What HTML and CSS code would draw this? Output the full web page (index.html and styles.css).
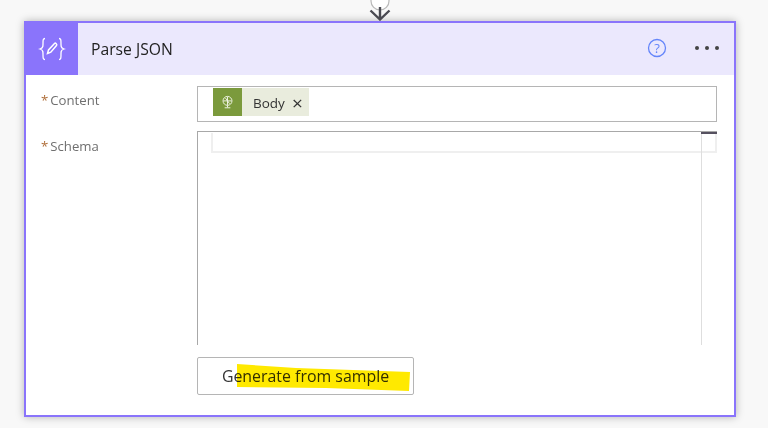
FILE: index.html
```html
<!DOCTYPE html>
<html lang="en">
<head>
  <meta charset="UTF-8">
  <meta name="viewport" content="width=device-width, initial-scale=1.0">
  <title>Parse JSON</title>
  <link rel="stylesheet" href="styles.css">
</head>
<body>
  <div class="connector">
    <svg width="28" height="21" viewBox="0 0 28 21">
      <circle cx="14" cy="1" r="9" fill="#fff" stroke="#b9b9b9" stroke-width="1.2"/>
      <path d="M14 7V20M4.500 10.500L14 19.500L23.500 10.500" fill="none" stroke="#4a4a52" stroke-width="2.400"/>
    </svg>
  </div>

  <div class="card">
    <div class="card-header">
      <div class="action-icon">
        <svg width="28" height="28" viewBox="0 0 28 28" fill="none" stroke="#fff" stroke-width="1.300">
          <path d="M7 3.500C4 3.500 5.500 8 4.800 11.500C4.500 13 3.500 13.500 2 14C3.500 14.500 4.500 15 4.800 16.500C5.500 20 4 24.500 7 24.500"/>
          <path d="M21 3.500C24 3.500 22.500 8 23.200 11.500C23.500 13 24.500 13.500 26 14C24.500 14.500 23.500 15 23.200 16.500C22.500 20 24 24.500 21 24.500"/>
          <path d="M9.500 18.500L10.500 15L16.500 8.500C17.500 7.500 19.500 9.300 18.500 10.500L12.800 17.200Z" stroke-width="1.500"/>
        </svg>
      </div>
      <div class="card-title">Parse JSON</div>
      <svg class="help-icon" width="20" height="20" viewBox="0 0 20 20">
        <circle cx="10" cy="10" r="8.500" fill="none" stroke="#6485fa" stroke-width="1.300"/>
        <text x="10" y="14.500" text-anchor="middle" class="help-mark">?</text>
      </svg>
      <div class="more-dots"><span></span><span></span><span></span></div>
    </div>

    <div class="card-body">
      <div class="field-row content-row">
        <label class="field-label"><span class="required">*</span>Content</label>
        <div class="token-input">
          <div class="token">
            <div class="token-icon">
              <svg width="13" height="15" viewBox="0 0 16 18" fill="none" stroke="#eef3e2" stroke-width="1.200">
                <circle cx="8" cy="7" r="5.500"/>
                <path d="M3 7H13M8 2V12M5.500 3.500L10.500 10.500"/>
                <path d="M8 12.500V15M4.500 15.500H11.500"/>
              </svg>
            </div>
            <span class="token-text">Body</span>
            <span class="token-close">×</span>
          </div>
        </div>
      </div>

      <div class="field-row schema-row">
        <label class="field-label"><span class="required">*</span>Schema</label>
        <div class="schema-box">
          <div class="schema-line"></div>
          <div class="schema-scroll"></div>
        </div>
      </div>

      <div class="button-row">
        <button class="sample-btn">Generate from sample
          <svg class="marker" width="176" height="29" viewBox="0 0 176 29">
            <path d="M1 1L60 5L174 9L173 28L90 25L1 24Z" fill="#ffe900"/>
          </svg>
        </button>
      </div>
    </div>
  </div>
</body>
</html>
```

FILE: styles.css
```css
body {
  font-family: 'Open Sans', sans-serif;
  background: #f8f8f8;
  margin: 0;
  padding: 0 32px 0 24px;
  height: 428px;
  box-sizing: border-box;
  overflow: hidden;
}
.connector {
  height: 21px;
  display: flex;
  justify-content: center;
}
.card {
  height: 396px;
  box-sizing: border-box;
  background: #ffffff;
  border: 2px solid #8a74fb;
  box-shadow: 0 0 8px rgba(0,0,0,0.28);
}
.card-header {
  height: 52px;
  background: #ebe8fd;
  display: flex;
  align-items: center;
}
.action-icon {
  width: 52px;
  height: 52px;
  background: #8a74fb;
  display: flex;
  align-items: center;
  justify-content: center;
}
.card-title {
  flex: 1;
  margin-left: 13px;
  font-size: 15.7px;
  color: #222;
}
.help-icon {
  margin-right: 28px;
  margin-top: -2px;
}
.help-mark {
  font-size: 13px;
  fill: #6485fa;
}
.more-dots {
  display: flex;
  gap: 6px;
  margin-right: 15px;
  margin-top: -2px;
}
.more-dots span {
  width: 4px;
  height: 4px;
  border-radius: 50%;
  background: #444;
}
.card-body {
  padding: 11px 17px 0 15px;
}
.field-row {
  display: flex;
}
.field-label {
  width: 156px;
  font-size: 13.2px;
  color: #6f6f6f;
  padding-top: 5px;
}
.required {
  color: #b0703c;
  margin-right: 2px;
}
.token-input {
  flex: 1;
  height: 36px;
  box-sizing: border-box;
  border: 1px solid #b5b5b5;
  padding: 1px 15px;
}
.token {
  display: inline-flex;
  align-items: center;
  height: 28px;
  background: #e9ecdd;
  padding-right: 6px;
}
.token-icon {
  width: 29px;
  height: 28px;
  background: #7b9a3c;
  display: flex;
  align-items: center;
  justify-content: center;
}
.token-text {
  margin-left: 11px;
  font-size: 13.5px;
  color: #333;
  padding-top: 1px;
}
.token-close {
  margin-left: 7px;
  font-size: 19px;
  line-height: 1;
  color: #333;
  padding-top: 2px;
}
.schema-row {
  margin-top: 9px;
}
.schema-row .field-label {
  padding-top: 6px;
}
.schema-box {
  flex: 1;
  height: 214px;
  box-sizing: border-box;
  border-top: 1px solid #a8a8a8;
  border-left: 1px solid #a8a8a8;
  position: relative;
}
.schema-line {
  height: 20px;
  margin: 1px 0 0 13px;
  border: 2px solid #efefef;
  border-top: 0;
  box-sizing: border-box;
}
.schema-scroll {
  position: absolute;
  top: 0;
  right: 15px;
  bottom: 0;
  width: 1px;
  background: #dedede;
}
.schema-scroll::before {
  content: "";
  position: absolute;
  top: 0;
  left: 0;
  width: 16px;
  height: 2px;
  background: #55505f;
}
.button-row {
  margin: 12px 0 0 156px;
}
.sample-btn {
  position: relative;
  width: 217px;
  height: 38px;
  background: #fff;
  border: 1px solid #b5b5b5;
  border-radius: 2px;
  font-family: 'Open Sans', sans-serif;
  font-size: 15.9px;
  color: #333;
  padding: 0;
}
.marker {
  position: absolute;
  left: 38px;
  top: 5px;
  mix-blend-mode: multiply;
}
```
